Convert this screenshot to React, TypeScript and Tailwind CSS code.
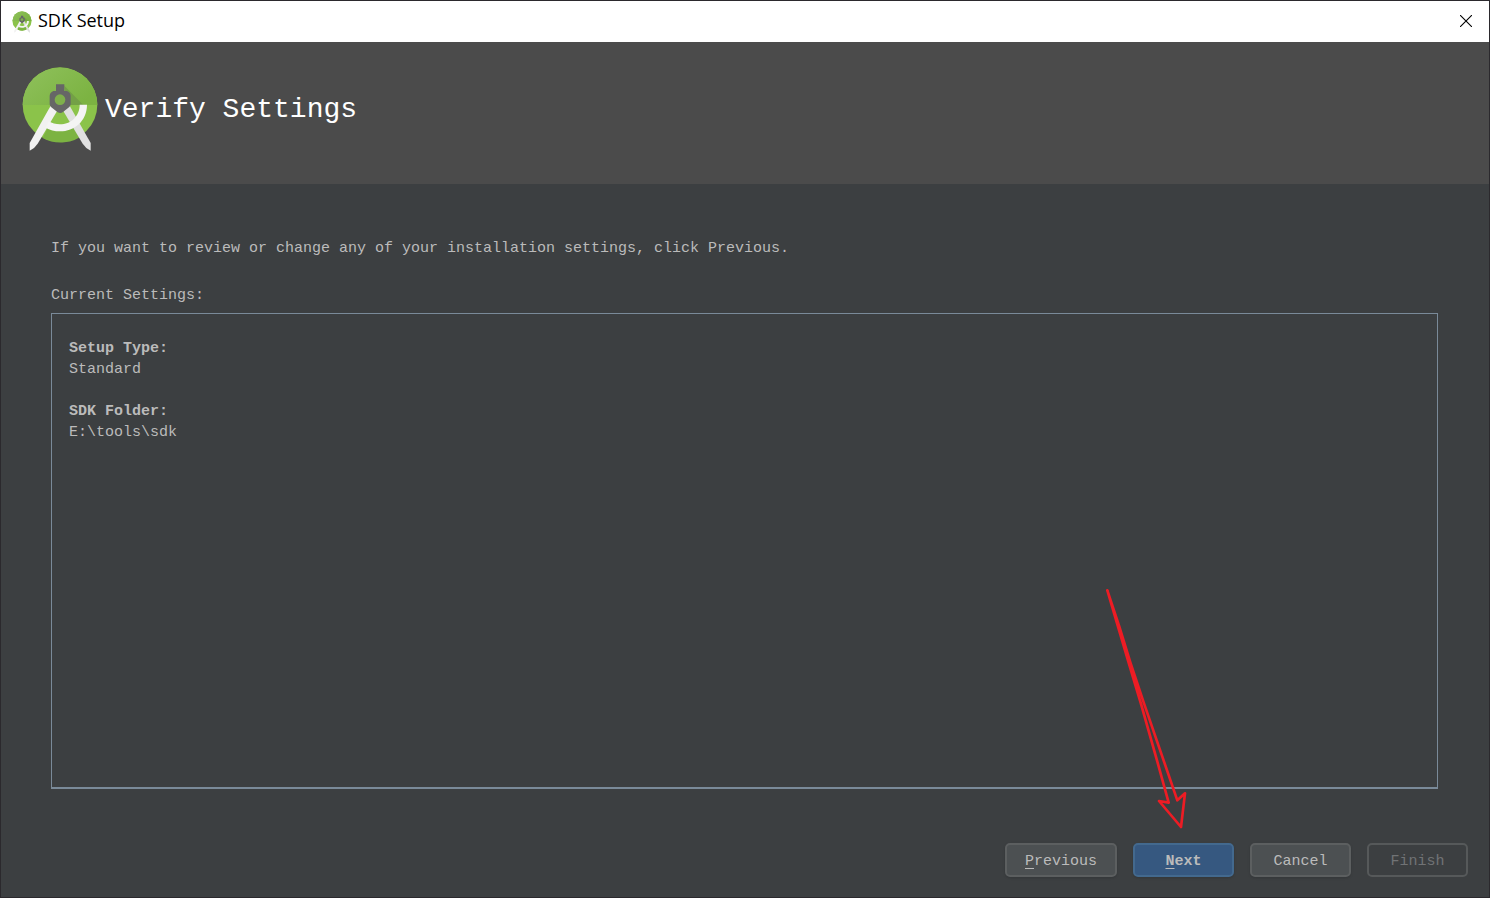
import clsx from "clsx";

type LogoProps = {
  className: string;
};

function StudioLogo({ className }: LogoProps) {
  return (
    <svg viewBox="36 33 228 258" className={className} aria-hidden="true">
      <defs>
        <linearGradient id="studioTop" x1="0" y1="0" x2="1" y2="0.6">
          <stop offset="0%" stopColor="#8fc15c" />
          <stop offset="100%" stopColor="#7cb342" />
        </linearGradient>
      </defs>
      <circle cx="150" cy="149" r="112" fill="#8bc34a" />
      <path d="M38 150a112 112 0 0 1 224 0z" fill="url(#studioTop)" />
      <path d="M163 92l57 58h-50z" fill="#73a046" />
      <path d="M112 222l94-8 18 22a112 112 0 0 1-126 13z" fill="#7cb342" />
      <path d="M176 147l66 117v23l-13-8-11-13-60-101z" fill="#e0e0e0" />
      <path d="M125 147L59 264v23l13-8 11-13 60-101z" fill="#f1f1f1" />
      <path
        d="M209 149h22c0 49-38 80-81 80-16 0-31-4-43-11l9-19c10 6 21 9 34 9 32 0 59-24 59-59z"
        fill="#f4f4f4"
      />
      <path
        d="M138 88h25v20h8q11 5 11 15v24q0 6-5 10l-18 14q-8 6-17 0l-18-14q-5-4-5-10v-24q0-10 11-15h8z"
        fill="#666666"
      />
      <circle cx="150" cy="134" r="16" fill="#7fb04b" />
    </svg>
  );
}

const settings = [
  { label: "Setup Type:", value: "Standard" },
  { label: "SDK Folder:", value: "E:\\tools\\sdk" },
];

type WizardButtonProps = {
  label: string;
  mnemonic?: boolean;
  primary?: boolean;
  disabled?: boolean;
  wide?: boolean;
};

function WizardButton({ label, mnemonic, primary, disabled, wide }: WizardButtonProps) {
  return (
    <button
      type="button"
      disabled={disabled}
      className={clsx(
        "h-[34px] rounded-[5px] border-2 pt-0.5",
        wide ? "w-28" : "w-[101px]",
        primary && "border-[#43698e] bg-[#365880] font-bold shadow-sm",
        disabled && "border-[#56595a] text-[#717375]",
        !primary && !disabled && "border-[#5c5f60] bg-[#4c5052] shadow-sm"
      )}
    >
      {mnemonic ? (
        <>
          <span className="underline underline-offset-3">{label[0]}</span>
          {label.slice(1)}
        </>
      ) : (
        label
      )}
    </button>
  );
}

export default function App() {
  return (
    <div className="flex min-h-screen flex-col border border-[#2b292d] bg-[#3c3f41] font-['Liberation_Mono',monospace] text-[15px] leading-[21px] text-[#bbbbbb]">
      <div className="flex h-[41px] items-center bg-white pl-[11px] text-black">
        <StudioLogo className="h-[22px] w-5" />
        <span className="ml-[6px] flex-1 pb-0.5 font-['Open_Sans',sans-serif] text-[18px]">SDK Setup</span>
        <button type="button" aria-label="Close" className="flex h-full w-[46px] items-center justify-center pb-px">
          <svg viewBox="0 0 12 12" className="size-3" aria-hidden="true">
            <path d="M0 0l12 12M12 0L0 12" stroke="#000" strokeWidth="1.1" />
          </svg>
        </button>
      </div>

      <header className="flex h-[142px] items-start bg-[#4b4b4b] pt-6 pl-[21px]">
        <StudioLogo className="h-[86px] w-[76px]" />
        <h1 className="ml-[7px] pt-1 text-[28px] leading-[80px] text-white">Verify Settings</h1>
      </header>

      <main className="flex flex-1 flex-col pt-[54px] pr-[51px] pl-[50px]">
        <p>If you want to review or change any of your installation settings, click Previous.</p>
        <p className="mt-[26px]">Current Settings:</p>
        <div className="mt-[7px] flex-1 border border-b-2 border-[#7a8a99] px-[17px] py-6">
          <dl className="flex flex-col gap-[21px]">
            {settings.map((s) => (
              <div key={s.label}>
                <dt className="font-bold">{s.label}</dt>
                <dd>{s.value}</dd>
              </div>
            ))}
          </dl>
        </div>
      </main>

      <footer className="flex justify-end gap-4 pt-[54px] pr-[21px] pb-5">
        <WizardButton label="Previous" mnemonic wide />
        <div className="relative">
          <WizardButton label="Next" mnemonic primary />
          {/* hand-drawn pointer to the next step */}
          <svg
            viewBox="0 0 330 780"
            className="pointer-events-none absolute bottom-full -left-[43px] mb-[3px] h-[260px] w-[110px]"
            aria-hidden="true"
          >
            <path
              d="M52 31L84 140L115 245L154 375L202 545L236 668L207 663L273 741L285 640L262 661L162 370L122 250L88 140Z"
              fill="none"
              stroke="#ed1c24"
              strokeWidth="8"
              strokeLinejoin="round"
            />
          </svg>
        </div>
        <WizardButton label="Cancel" />
        <WizardButton label="Finish" disabled />
      </footer>
    </div>
  );
}
